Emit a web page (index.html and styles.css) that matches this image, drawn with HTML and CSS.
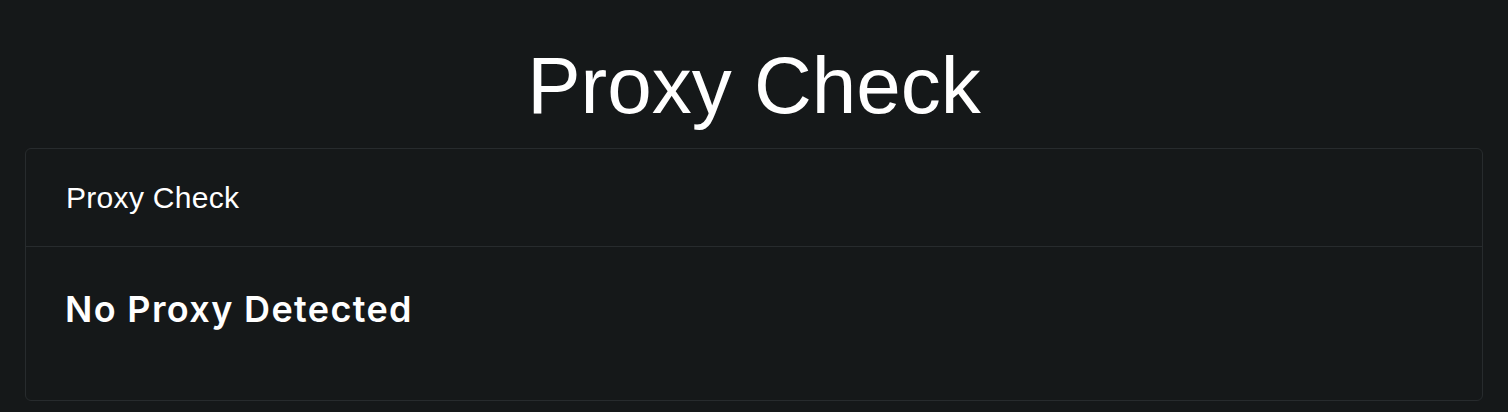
FILE: index.html
```html
<!DOCTYPE html>
<html lang="en">
<head>
    <meta charset="UTF-8">
    <meta name="viewport" content="width=device-width, initial-scale=1.0">
    <title>Proxy Check</title>
    <link rel="stylesheet" href="styles.css">
</head>
<body>
    <div class="container">
        <h1 class="page-title">Proxy Check</h1>
        <div class="card">
            <div class="card-header">Proxy Check</div>
            <div class="card-body">
                <h3 class="result">No Proxy Detected</h3>
            </div>
        </div>
    </div>
</body>
</html>
```

FILE: styles.css
```css
body {
    margin: 0;
    background: #151819;
    color: #fff;
    font-family: "Liberation Sans", Arial, sans-serif;
}
.container {
    padding: 0 25px;
}
.page-title {
    margin: 38px 0 14px;
    font-size: 80px;
    line-height: 96px;
    font-weight: normal;
    text-align: center;
}
.card {
    border: 1px solid #272b2d;
    border-radius: 6px;
}
.card-header {
    padding: 31px 39px 30px 40px;
    font-size: 30px;
    line-height: 36px;
    letter-spacing: 0.3px;
    border-bottom: 1px solid #272b2d;
}
.card-body {
    padding: 41px 39px 70px 39px;
}
.result {
    margin: 0;
    font-family: Inter, "Liberation Sans", sans-serif;
    font-size: 36px;
    line-height: 42px;
    font-weight: 600;
    letter-spacing: 1.35px;
}
```
